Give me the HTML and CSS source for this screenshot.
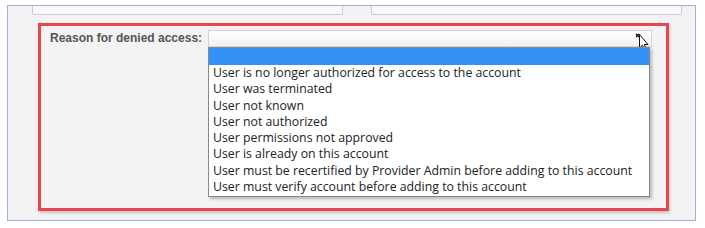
FILE: index.html
```html
<!DOCTYPE html>
<html lang="en">
<head>
    <meta charset="UTF-8">
    <title>Reason for denied access</title>
    <link rel="stylesheet" href="styles.css">
</head>
<body>

    <div class="panel">
        <div class="top-boxes">
            <div class="top-box left"></div>
            <div class="top-box right"></div>
        </div>

        <div class="highlight">
            <div class="form-row">
                <label class="field-label" for="reason">Reason for denied access:</label>
                <div class="select-wrap">
                    <div class="fake-select" id="reason">
                        <svg class="cursor" width="14" height="20" viewBox="0 0 14 20">
                            <path d="M1 4 L4 1 M1 1 L4 4" stroke="#111" stroke-width="1.4"/>
                            <path d="M4.5 1.5 L4.5 15 L7.5 12.2 L9.6 17 L11.4 16.2 L9.3 11.5 L13 11.5 Z" fill="#fff" stroke="#111" stroke-width="1" stroke-linejoin="round"/>
                        </svg>
                    </div>
                    <ul class="dropdown">
                        <li class="selected">&nbsp;</li>
                        <li>User is no longer authorized for access to the account</li>
                        <li>User was terminated</li>
                        <li>User not known</li>
                        <li>User not authorized</li>
                        <li>User permissions not approved</li>
                        <li>User is already on this account</li>
                        <li>User must be recertified by Provider Admin before adding to this account</li>
                        <li>User must verify account before adding to this account</li>
                    </ul>
                </div>
            </div>
        </div>
    </div>

</body>
</html>
```

FILE: styles.css
```css
/* Global Styles */
body {
    margin: 0;
    padding: 0;
    background: #fff;
    font-family: 'Liberation Sans', Arial, sans-serif;
}

.panel {
    margin: 5px 0 0 7px;
    width: 689px;
    height: 216px;
    background: #f3f3f3;
    border: 1px solid #9db3d4;
    box-sizing: border-box;
}

.top-boxes {
    display: flex;
    height: 8px;
}

.top-box {
    height: 8px;
    background: #f8f8f8;
    border: 1px solid #cbcbcb;
    border-top: none;
    border-radius: 0 0 2px 2px;
}

.top-box.left {
    margin-left: 24px;
    width: 309px;
}

.top-box.right {
    margin-left: 28px;
    width: 309px;
}

.highlight {
    margin: 9px 0 0 30px;
    width: 631px;
    height: 188px;
    border: 3px solid #e4474c;
    box-sizing: border-box;
    box-shadow: 1px 2px 3px rgba(0, 0, 0, 0.2);
}

.form-row {
    display: flex;
    padding: 4px 0 0 9px;
}

.field-label {
    width: 158px;
    font-size: 12px;
    font-weight: bold;
    color: #555;
    line-height: 14px;
    padding-top: 1px;
}

.select-wrap {
    position: relative;
    width: 444px;
}

.fake-select {
    position: relative;
    height: 17px;
    box-sizing: border-box;
    border: 1px solid #d4d4d4;
    background: linear-gradient(#ffffff, #f1f1f1);
}

.cursor {
    position: absolute;
    right: 2px;
    top: 2px;
}

.dropdown {
    position: absolute;
    top: 17px;
    left: 0;
    width: 442px;
    margin: 0;
    padding: 0 0 1px;
    list-style: none;
    background: #fff;
    border: 1px solid #8a8a8a;
    box-sizing: border-box;
    box-shadow: 2px 2px 3px rgba(0, 0, 0, 0.25);
    font-family: 'Open Sans', sans-serif;
    font-size: 12.3px;
    color: #222;
}

.dropdown li {
    height: 16.3px;
    line-height: 16px;
    padding-left: 4px;
    white-space: nowrap;
}

.dropdown li.selected {
    background: #3390f4;
    height: 17px;
}
```
